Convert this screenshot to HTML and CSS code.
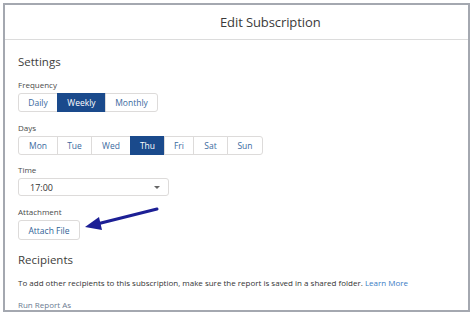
FILE: index.html
```html
<!DOCTYPE html>
<html>
<head>
<meta charset="utf-8">
<link rel="stylesheet" href="styles.css">
</head>
<body>
<div class="frame">
  <div class="header"><h1 class="title">Edit Subscription</h1></div>
  <div class="content">
    <h2 class="section">Settings</h2>
    <div class="field f-freq">
      <div class="label">Frequency</div>
      <div class="group">
        <span class="btn w-daily">Daily</span><span class="btn w-weekly on">Weekly</span><span class="btn w-monthly">Monthly</span>
      </div>
    </div>
    <div class="field f-days">
      <div class="label">Days</div>
      <div class="group">
        <span class="btn w-mon">Mon</span><span class="btn w-tue">Tue</span><span class="btn w-wed">Wed</span><span class="btn w-thu on">Thu</span><span class="btn w-fri">Fri</span><span class="btn w-sat">Sat</span><span class="btn w-sun">Sun</span>
      </div>
    </div>
    <div class="field f-time">
      <div class="label">Time</div>
      <div class="select"><span>17:00</span><span class="caret"></span></div>
    </div>
    <div class="field f-attach">
      <div class="label">Attachment</div>
      <span class="attach">Attach File</span>
    </div>
    <h2 class="section recip">Recipients</h2>
    <p class="info">To add other recipients to this subscription, make sure the report is saved in a shared folder. <a class="link">Learn More</a></p>
    <div class="label runas">Run Report As</div>
  </div>
  <svg class="arrow" width="90" height="30" viewBox="0 0 90 30">
    <line x1="78" y1="3" x2="18" y2="18" stroke="#1c1f95" stroke-width="3" stroke-linecap="round"/>
    <polygon points="6,21 20,11 23,24" fill="#1c1f95"/>
  </svg>
</div>
</body>
</html>
```

FILE: styles.css
```css
* { box-sizing: border-box; }
body {
  margin: 0;
  background: #ffffff;
  font-family: "Open Sans", "Liberation Sans", sans-serif;
  color: #3e3e3c;
}
.frame {
  position: relative;
  margin: 3px 0 0 3px;
  width: 467px;
  height: 309px;
  border: 2px solid #a4a8b0;
  overflow: hidden;
  background: #fff;
}
.header {
  height: 35px;
  border-bottom: 1px solid #dcdcdc;
  display: flex;
  align-items: center;
  padding-left: 215px;
}
.title {
  margin: 0;
  font-size: 13px;
  font-weight: 400;
  color: #3a3a3a;
  letter-spacing: -0.1px;
}
.content {
  padding: 14px 0 0 13px;
}
.section {
  margin: 0;
  font-size: 11.5px;
  font-weight: 400;
  line-height: 16px;
  color: #3e3e3c;
}
.field { display: flex; flex-direction: column; align-items: flex-start; }
.f-freq { margin-top: 9px; }
.f-days { margin-top: 10px; }
.f-time { margin-top: 9px; }
.f-attach { margin-top: 10px; }
.label {
  font-size: 8px;
  line-height: 12px;
  color: #4a4a4a;
  margin-bottom: 2px;
}
.group { display: flex; }
.btn {
  height: 19px;
  display: flex;
  align-items: center;
  justify-content: center;
  font-size: 8.5px;
  color: #3b6aa0;
  border: 1px solid #dddbda;
  margin-left: -1px;
  background: #fff;
}
.btn:first-child { margin-left: 0; border-radius: 3px 0 0 3px; }
.btn:last-child { border-radius: 0 3px 3px 0; }
.btn.on { background: #1a4a8c; border-color: #1a4a8c; color: #fff; }
.w-daily { width: 40px; }
.w-weekly { width: 49px; }
.w-monthly { width: 53px; }
.w-mon { width: 40px; }
.w-tue { width: 35px; }
.w-wed { width: 40px; }
.w-thu { width: 35px; }
.w-fri { width: 30px; }
.w-sat { width: 35px; }
.w-sun { width: 36px; }
.select {
  width: 151px;
  height: 18px;
  border: 1px solid #dddbda;
  border-radius: 3px;
  display: flex;
  align-items: center;
  justify-content: space-between;
  padding: 0 8px 0 11px;
  font-size: 9px;
  color: #333;
}
.caret {
  width: 0; height: 0;
  border-left: 3px solid transparent;
  border-right: 3px solid transparent;
  border-top: 3px solid #666;
}
.attach {
  width: 62px;
  height: 20px;
  border: 1px solid #dddbda;
  border-radius: 3px;
  display: flex;
  align-items: center;
  justify-content: center;
  font-size: 8.5px;
  color: #2f5f96;
}
.recip { margin-top: 12px; }
.info {
  margin: 9px 0 0;
  font-size: 8px;
  line-height: 12px;
  color: #333;
  white-space: nowrap;
}
.link { color: #3a7cc4; }
.runas { margin-top: 10px; color: #6a7a90; }
.arrow {
  position: absolute;
  left: 74px;
  top: 201px;
}
```
